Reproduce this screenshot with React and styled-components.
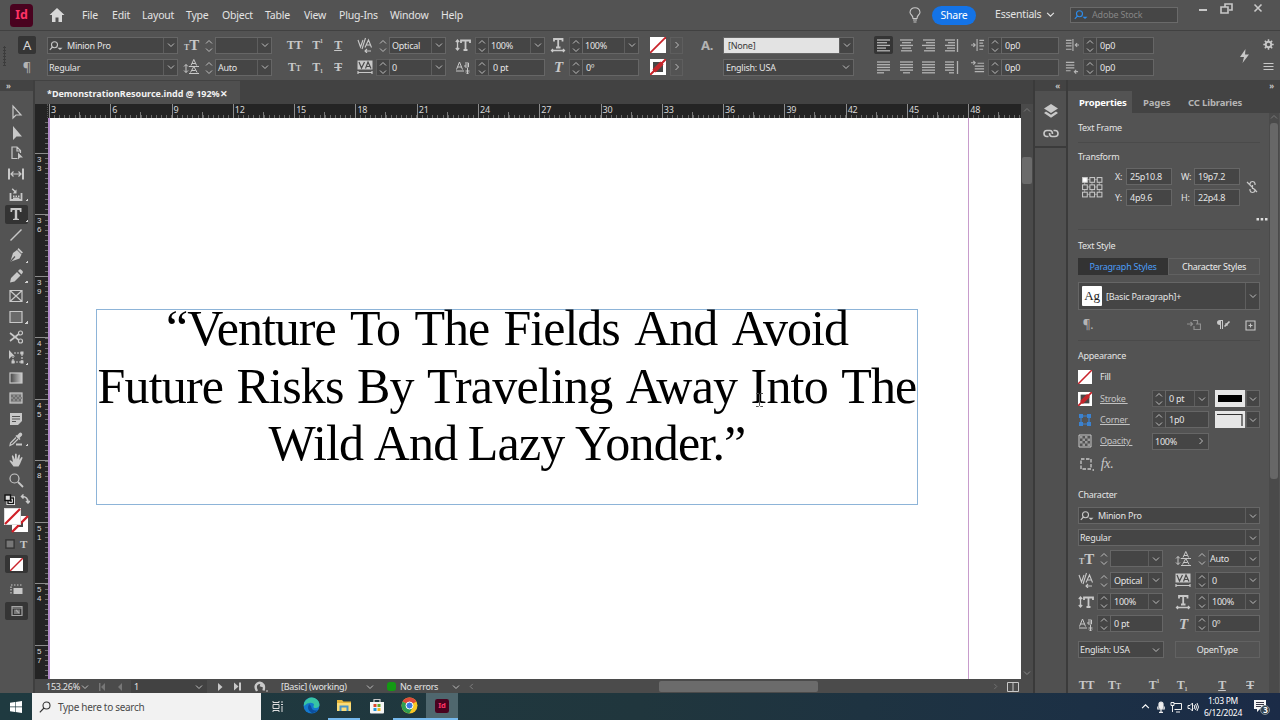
import React from "react";
import styled, { createGlobalStyle } from "styled-components";

const UI_FONT = '"Noto Sans", "Open Sans", sans-serif';

const GlobalStyle = createGlobalStyle`
  * {
    box-sizing: border-box;
  }

  body {
    margin: 0;
    overflow: hidden;
    background: #535353;
  }
`;

/* text shown on the page */
const QUOTE = [
  { width: 682, spacing: -1, words: ["“Venture", "To", "The", "Fields", "And", "Avoid"] },
  { width: 819, spacing: -0.8, words: ["Future", "Risks", "By", "Traveling", "Away", "Into", "The"] },
  { width: 477, spacing: -0.8, words: ["Wild", "And", "Lazy", "Yonder.”"] },
];

const H_MARKS = [3, 6, 9, 12, 15, 18, 21, 24, 27, 30, 33, 36, 39, 42, 45, 48];
const V_MARKS = [33, 36, 39, 42, 45, 48, 51, 54, 57];

/* ---------- icons ---------- */

const Svg = styled.svg`
  display: block;
  flex: none;
  width: ${(p) => p.$w || 16}px;
  height: ${(p) => p.$h || p.$w || 16}px;
  fill: none;
  stroke: ${(p) => p.$color || "#c8c8c8"};
  stroke-width: ${(p) => p.$line || 1.2};
`;

const Chevron = ({ dir = "down", w = 8, color = "#bdbdbd" }) => {
  const paths = {
    down: "M1 2.5 4 5.5 7 2.5",
    up: "M1 5.5 4 2.5 7 5.5",
    right: "M2.5 1 5.5 4 2.5 7",
    left: "M5.5 1 2.5 4 5.5 7",
  };
  return (
    <Svg $w={w} viewBox="0 0 8 8" $color={color} $line={1}>
      <path d={paths[dir]} />
    </Svg>
  );
};

const FILL = { fill: "#c8c8c8", stroke: "none" };

const TOOLS = [
  { id: "select", art: <path d="M5 2v12l3-3h5z" /> },
  { id: "direct", art: <path {...FILL} d="M5 1v14l3.500-3.500H14z" /> },
  { id: "page", art: <><path d="M9.500 13.500H4V2h5l3.500 3.500V8M9 2v4h3.500" /><path {...FILL} d="M10 7.500v7l2-2h3z" /></> },
  { id: "gap", art: <><path strokeWidth="2" d="M1 2.500v11M15 2.500v11" /><path d="M3 8h10M5.500 5.500 3 8l2.500 2.500M10.500 5.500 13 8l-2.500 2.500" /></> },
  { id: "collect", more: true, art: <><path strokeWidth="1.800" d="M2.500 7v7h11V7" /><path {...FILL} d="M5 9.500h1.500V11H5zM7.500 9.500H9V11H7.500zM10 9.500h1.500V11H10zM5 11.500h6.500V13H5zM8.500 7.500V3.500L7.200 4.800 4.700 2.300 3.700 3.300l2.500 2.500L4.900 7.500z" /></> },
  { id: "type", more: true, active: true, art: <path {...FILL} d="M2.500 2h11v4H12l-.5-2H9.200v8.500l1.800.5v1H5v-1l1.800-.5V4H4.500L4 6H2.500z" /> },
  { id: "line", art: <path d="M2.500 13.500l11-11" strokeWidth="1.500" /> },
  { id: "pen", more: true, art: <><path {...FILL} d="M9 3l4.500 4.500-2 4L3 14.500l-.5-.5L5 6z" /><path stroke="#535353" d="M3 14l4-4.500" /><path {...FILL} d="M10.500 1l4.500 4.500-1.500 1L9.500 2.500z" /></> },
  { id: "pencil", more: true, art: <path {...FILL} d="M2 14.500l1-4.500 6-6 3.500 3.500-6 6zM10 3l1.500-1.500q1-.5 2 .5l1 1q.8 1 .2 1.800L13.500 6.500z" /> },
  { id: "frame", more: true, art: <path d="M2 2.500h12v11H2zM2 2.500l12 11M14 2.500l-12 11" /> },
  { id: "rect", more: true, art: <path fill="#6a6a6a" d="M2 2.500h12v11H2z" /> },
  { id: "scissors", art: <><circle cx="12.500" cy="4" r="2" /><circle cx="12.500" cy="12" r="2" /><path strokeWidth="1.600" d="M10.800 11 2 4M10.800 5 2 12" /></> },
  { id: "transform", more: true, art: <><path strokeDasharray="2 1" d="M6 4h8v9H5V8" /><path {...FILL} d="M1 1v9l2.500-2.500H7zM12.500 2.500h3v3h-3zM12.500 11.500h3v3h-3zM3.500 11.500h3v3h-3z" /></> },
  { id: "gradient", art: <rect x="2" y="3" width="12" height="10" fill="url(#toolGradient)" /> },
  { id: "feather", art: <><rect x="2" y="3" width="12" height="10" fill="#8b8b8b" /><path stroke="#555" strokeDasharray="2 2" d="M3 6h10M5 8h9M3 10h10" /></> },
  { id: "note", art: <><path {...FILL} d="M2 2h12v8l-4 4H2z" /><path stroke="#535353" d="M4 5.500h8M4 8h8M4 10.500h4" /></> },
  { id: "eyedropper", more: true, art: <><path d="M8 6.500 2.500 12l-.5 2.500L5 13l5-5" /><path {...FILL} d="M7.500 5l4 4 1-1-1-1 2.500-2.500q.8-1.500-.4-2.500-1.200-1-2.300 0L9 4.500l-.8-.6zM8 12.500h6v2H8z" /></> },
  { id: "hand", art: <path {...FILL} d="M5.500 14.500 1.500 9q0-1 1.300-.6L5 10 3.800 4q.8-1.300 1.600 0L7 7.500V2q.9-1.200 1.700 0l.2 5.500L10.500 3q1-1 1.500.2L11.300 8l2-2.800q1.200-.5 1.200.8L12 12l-1.500 2.500z" /> },
  { id: "zoom", art: <><circle cx="6.500" cy="6.500" r="4.500" /><path strokeWidth="1.800" d="M10 10l5 5" /></> },
];

const SearchIcon = ({ color = "#c8c8c8" }) => (
  <Svg $w={14} $h={10} viewBox="0 0 14 10" $color={color} $line={1.1}>
    <circle cx="5.500" cy="3.800" r="3" />
    <path d="M3.500 6 .8 8.800" />
    <path d="M8.500 6.800h5L11 9z" fill={color} stroke="none" />
  </Svg>
);

const NoneSwatch = ({ w = 16, frame }) => (
  <Svg $w={w} viewBox="0 0 16 16">
    <rect width="16" height="16" fill="#fff" stroke="none" />
    {frame && <rect x="3" y="3" width="10" height="10" fill="#474747" stroke="none" />}
    <path d="M0 16 16 0" stroke="#c9232a" strokeWidth={frame ? 2 : 1.8} />
    {frame && <path d="M4 12 12 4" stroke="#c3262c" strokeWidth="4.500" />}
  </Svg>
);

/* glyph built from serif capitals, as on the character controls */
const Glyph = styled.span`
  display: inline-flex;
  align-items: baseline;
  justify-content: center;
  width: ${(p) => p.$w || 17}px;
  color: #c8c8c8;
  font: ${(p) => (p.$italic ? "italic " : "")}${(p) => (p.$light ? "normal" : "bold")} ${(p) => p.$size || 12}px/14px "Liberation Serif", serif;
  text-decoration: ${(p) => p.$deco || "none"};
  letter-spacing: -0.3px;

  small {
    font-size: 8px;
    line-height: 8px;
  }

  sup {
    font-size: 6px;
    line-height: 6px;
    align-self: flex-start;
  }

  sub {
    font-size: 6px;
    line-height: 6px;
    align-self: flex-end;
  }
`;

const SizeIcon = () => <Glyph $size={15}><small>T</small>T</Glyph>;

const LeadingIcon = () => (
  <Svg $w={16} viewBox="0 0 16 16" $line={1}>
    <path d="M3 5.500v8M1 7.500l2-2 2 2M1 11.500l2 2 2-2M6 7.500h10M6 14.500h10M8 6.500l2.800-6 2.800 6M9 4.500h3.600M7.500 13.500l3.300-6 3.300 6M9 11.500h3.600" />
  </Svg>
);

const KerningIcon = () => (
  <Svg $w={16} viewBox="0 0 16 16" $line={1.1}>
    <path d="M1 3l2.500 7L6 3M8.500 1 5 12M8 10.500 11.500 3l3 7.500M9 8h5M8 14h6M10 12l-2 2 2 2" />
  </Svg>
);

const TrackingIcon = () => (
  <Svg $w={16} viewBox="0 0 16 16" $line={1.2}>
    <rect x=".5" y="1.500" width="15" height="9" fill="#c8c8c8" stroke="none" />
    <path stroke="#4a4a4a" d="M2 3l2.500 6L7.500 3M8.500 9.500 11 3l3 6.500M9.500 7.500h4" />
    <path d="M1 13.500h14M1 12v3M15 12v3" />
  </Svg>
);

const VScaleIcon = () => (
  <Svg $w={16} viewBox="0 0 16 16" $line={1.3}>
    <path d="M2.500 3v10M.8 5l1.700-2 1.700 2M.8 11l1.700 2 1.700-2" />
    <path strokeWidth="1.800" d="M6 6V3.500h9V6M10.500 3.500V13M8.500 13h4" />
  </Svg>
);

const HScaleIcon = () => (
  <Svg $w={16} viewBox="0 0 16 16" $line={1.3}>
    <path strokeWidth="1.800" d="M4 4.500V2h8.500v2.500M8.200 2v8.500M6 10.500h4.500" />
    <path d="M1.500 13.500h13M3 12l-1.500 1.500L3 15M13 12l1.500 1.500L13 15" />
  </Svg>
);

const BaselineIcon = () => (
  <Svg $w={16} viewBox="0 0 16 16" $line={1}>
    <path d="M1 12h8M1.500 10.500 4.500 3l3 7.500M2.500 8h4M10 4h3.500v4H10V6h3.500M12.500 9v6M10.500 12h4M11 13.500l1.500 1.500 1.500-1.500" />
  </Svg>
);

const ALIGN_LINES = {
  left: [[1, 14], [1, 11], [1, 14], [1, 10], [1, 14]],
  center: [[1, 14], [3, 12], [1, 14], [3, 12], [2, 13]],
  right: [[2, 14], [5, 14], [1, 14], [5, 14], [3, 14]],
  spine: [[1, 11], [4, 11], [1, 11], [3, 11], [1, 11]],
  jleft: [[1, 14], [1, 14], [1, 14], [1, 14], [1, 8]],
  jcenter: [[1, 14], [1, 14], [1, 14], [1, 14], [4, 11]],
  jfull: [[1, 14], [1, 14], [1, 14], [1, 14], [1, 14]],
  jspine: [[1, 10], [1, 10], [1, 10], [1, 10], [5, 10]],
};

const AlignIcon = ({ kind }) => (
  <Svg $w={15} viewBox="0 0 15 15" $line={1.3} $color="#b4b4b4">
    {ALIGN_LINES[kind].map(([a, b], i) => (
      <path key={i} d={`M${a} ${2 + i * 2.7}H${b}`} />
    ))}
    {kind.endsWith("spine") && <path d="M13.500 1v13" />}
  </Svg>
);

const IndentIcon = ({ kind }) => {
  const art = {
    left: "M0 7.500h4M2.500 5.500l2 2-2 2M6.500 1v13M9 2.500h5M9 5.500h4M9 8.500h5M9 12h4",
    right: "M15 7.500h-3M13 5.500l-2 2 2 2M8.500 1v13M1 2.500h6M1 5.500h6M1 8.500h6M1 12h6",
    first: "M0 3h4M2.500 1l2 2-2 2M7 3.500h7M4 6.500h10M4 9.500h10M4 12.500h10",
    last: "M1 2.500h9M1 5.500h9M1 8.500h9M1 11.500h5M14 12.500h-4M12 10.500l-2 2 2 2",
  };
  return (
    <Svg $w={14} viewBox="0 0 15 15" $line={1.2} $color="#b4b4b4">
      <path d={art[kind]} />
    </Svg>
  );
};

/* ---------- shared controls ---------- */

const Shell = styled.div`
  display: flex;
  flex-direction: column;
  width: 1280px;
  height: 720px;
  overflow: hidden;
  background: #535353;
  color: #e4e4e4;
  font: 9px/12px ${UI_FONT};
  letter-spacing: -0.25px;
  white-space: nowrap;
`;

const Box = styled.div`
  display: flex;
  width: ${(p) => p.$w}px;
  height: ${(p) => p.$h || 17}px;
  background: #454545;
  border: 1px solid #666;
`;

const Value = styled.span`
  display: flex;
  align-items: center;
  flex: 1;
  gap: 4px;
  min-width: 0;
  padding-top: 1px;
  padding-left: ${(p) => p.$pad ?? 3}px;
  background: ${(p) => (p.$light ? "#e3e3e3" : "transparent")};
  color: ${(p) => (p.$light ? "#3a3a3a" : "#e4e4e4")};
`;

const Arrow = styled.span`
  display: flex;
  align-items: center;
  justify-content: center;
  width: 14px;
  border-left: ${(p) => (p.$plain ? "none" : "1px solid #5e5e5e")};
`;

const SpinBox = styled.span`
  display: flex;
  flex-direction: column;
  align-items: center;
  justify-content: space-between;
  width: 13px;
  height: 17px;
  padding: 0 1px 0 0;
  background: ${(p) => (p.$off ? "transparent" : "#454545")};
  border: 1px solid ${(p) => (p.$off ? "transparent" : "#5e5e5e")};
  border-right: none;
`;

const Line = styled.div`
  display: flex;
`;

const Spin = ({ off }) => (
  <SpinBox $off={off}>
    <Chevron dir="up" w={8} />
    <Chevron dir="down" w={8} />
  </SpinBox>
);

const Select = ({ w, h, children, pad, light, plain }) => (
  <Box $w={w} $h={h}>
    <Value $pad={pad} $light={light}>{children}</Value>
    <Arrow $plain={plain}><Chevron /></Arrow>
  </Box>
);

const Combo = ({ w, value, arrow, off, pad }) => (
  <Line>
    <Spin off={off} />
    <Box $w={w - 13}>
      <Value $pad={pad}>{value}</Value>
      {arrow && <Arrow><Chevron dir={arrow} /></Arrow>}
    </Box>
  </Line>
);

/* ---------- menu bar ---------- */

const MenuBar = styled.header`
  display: flex;
  align-items: center;
  flex: none;
  height: 31px;
  padding-left: 10px;
  border-bottom: 1px solid #414141;
  font-size: 10.5px;
  letter-spacing: -0.2px;
`;

const Logo = styled.div`
  display: flex;
  align-items: center;
  justify-content: center;
  width: ${(p) => p.$size}px;
  height: ${(p) => p.$size}px;
  border-radius: ${(p) => p.$size / 6}px;
  background: #49021f;
  color: #ff3366;
  font: bold ${(p) => p.$size * 0.54}px/1 ${UI_FONT};
  letter-spacing: -0.2px;
`;

const HomeSlot = styled.div`
  margin: 0 0 0 16px;
  width: 33px;
`;

const MenuItem = styled.span`
  width: ${(p) => p.$w}px;
`;

const MenuRight = styled.div`
  display: flex;
  align-items: center;
  height: 100%;
  margin-left: auto;
`;

const Share = styled.div`
  width: 44px;
  height: 19px;
  margin: 0 19px 0 11px;
  border-radius: 10px;
  background: #1473e6;
  color: #fff;
  text-align: center;
  line-height: 19px;
`;

const StockSearch = styled.div`
  display: flex;
  align-items: center;
  gap: 4px;
  width: 108px;
  height: 16px;
  margin: 0 20px 0 17px;
  padding-left: 3px;
  border: 1px solid #6a6a6a;
  background: #464646;
  color: #858585;
  font-size: 9px;
`;

const WindowButtons = styled.div`
  display: flex;
  align-self: flex-start;
  align-items: center;
  height: 16px;
  width: 82px;
  gap: 12px;
`;

const CloseSlot = styled.span`
  margin-left: 8px;
`;

const Workspace = styled.span`
  display: flex;
  align-items: center;
  gap: 5px;
  width: 58px;
  margin-top: -2px;
`;

const MENUS = [
  ["File", 30], ["Edit", 30], ["Layout", 44], ["Type", 36], ["Object", 43],
  ["Table", 39], ["View", 35], ["Plug-Ins", 51], ["Window", 51], ["Help", 24],
];

const Menu = () => (
  <MenuBar>
    <Logo $size={23}>Id</Logo>
    <HomeSlot>
      <Svg $w={16} viewBox="0 0 16 16">
        <path d="M8 1 .5 8H3v7h3.500v-4.500h3V15H13V8h2.500z" fill="#d8d8d8" stroke="none" />
      </Svg>
    </HomeSlot>
    {MENUS.map(([name, w]) => (
      <MenuItem key={name} $w={w}>{name}</MenuItem>
    ))}
    <MenuRight>
      <Svg $w={12} $h={16} viewBox="0 0 12 16" $line={1.1}>
        <path d="M4 11.500Q4 9.500 2.500 8 1 6.500 1 5.200q.5-4.400 5-4.400t5 4.400Q11 6.500 9.500 8 8 9.500 8 11.500zM4 13h4M4.500 15h3" />
      </Svg>
      <Share>Share</Share>
      <Workspace>Essentials <Chevron w={9} color="#e4e4e4" /></Workspace>
      <StockSearch><SearchIcon color="#2d8ceb" />Adobe Stock</StockSearch>
      <WindowButtons>
        <Svg $w={10} viewBox="0 0 10 10" $line={2}><path d="M1 7h8" /></Svg>
        <Svg $w={13} viewBox="0 0 13 13" $line={1.6}><path d="M1 5h7v6H1zM5 4.500V2h7v6H9" /></Svg>
        <CloseSlot>
          <Svg $w={10} viewBox="0 0 10 10" $line={1.6}><path d="M1.500 1.500l7 7M8.500 1.500l-7 7" /></Svg>
        </CloseSlot>
      </WindowButtons>
    </MenuRight>
  </MenuBar>
);

/* ---------- control bar ---------- */

const ControlBar = styled.section`
  display: flex;
  flex: none;
  height: 49px;
  padding-left: 3px;
`;

const Grip = styled.i`
  width: 15px;
  height: 20px;
  margin-top: 15px;
  background: radial-gradient(circle, #3c3c3c 1px, transparent 1.2px) 0 0 / 3px 3px;
  background-clip: content-box;
  padding-right: 12px;
`;

const ControlGrid = styled.div`
  display: grid;
  grid-template-columns:
    29px 136px 19px 84px 23px 24px 24px 19px 79px 20px 75px 19px 81px 20px 28px
    25px 151px 23px 22px 23px 29px 17px 77px 18px 71px;
  grid-template-rows: 22px 22px;
  align-items: center;
  padding-top: 3px;
`;

const ModeButton = styled.span`
  width: 18px;
  height: 18px;
  border-radius: 2px;
  background: ${(p) => (p.$on ? "#353535" : "transparent")};
  color: ${(p) => (p.$dim ? "#b4b4b4" : "#d8d8d8")};
  font: ${(p) => (p.$bold ? "bold " : "")}${(p) => p.$size || 13}px/18px ${UI_FONT};
  text-align: center;
`;

const AlignButton = styled.span`
  display: flex;
  align-items: center;
  justify-content: center;
  width: 19px;
  height: 18px;
  border-radius: 2px;
  background: ${(p) => (p.$on ? "#353535" : "transparent")};
`;

const BarEnd = styled.div`
  display: flex;
  align-items: center;
  gap: 13px;
  margin-left: auto;
  padding-right: 6px;
`;

const BarEndStack = styled.div`
  display: flex;
  flex-direction: column;
  gap: 11px;
`;

const More = styled.span`
  display: flex;
  align-items: center;
  justify-content: center;
  width: 13px;
  height: 17px;
  border: 1px solid #5e5e5e;
`;

const Controls = () => (
  <ControlBar>
    <Grip />
    <ControlGrid>
      <ModeButton $on>A</ModeButton>
      <Select w={131} pad={1}><SearchIcon />Minion Pro</Select>
      <SizeIcon />
      <Combo w={70} off arrow="down" />
      <Glyph>TT</Glyph>
      <Glyph>T<sup>1</sup></Glyph>
      <Glyph $deco="underline" $w={10}>T</Glyph>
      <KerningIcon />
      <Combo w={70} off arrow="down" value="Optical" pad={2} />
      <VScaleIcon />
      <Combo w={70} arrow="down" value="100%" pad={2} />
      <HScaleIcon />
      <Combo w={70} arrow="down" value="100%" pad={2} />
      <NoneSwatch />
      <More><Chevron dir="right" /></More>
      <ModeButton $size={13} $bold $dim>A.</ModeButton>
      <Select w={131} light pad={4}>[None]</Select>
      <AlignButton $on><AlignIcon kind="left" /></AlignButton>
      <AlignButton><AlignIcon kind="center" /></AlignButton>
      <AlignButton><AlignIcon kind="right" /></AlignButton>
      <AlignButton><AlignIcon kind="spine" /></AlignButton>
      <IndentIcon kind="left" />
      <Combo w={71} value="0p0" />
      <IndentIcon kind="right" />
      <Combo w={71} value="0p0" />

      <ModeButton $dim>¶</ModeButton>
      <Select w={131} pad={1}>Regular</Select>
      <LeadingIcon />
      <Combo w={70} off arrow="down" value="Auto" pad={2} />
      <Glyph>T<small>T</small></Glyph>
      <Glyph>T<sub>1</sub></Glyph>
      <Glyph $deco="line-through" $w={10}>T</Glyph>
      <TrackingIcon />
      <Combo w={70} arrow="down" value="0" pad={2} />
      <BaselineIcon />
      <Combo w={70} value="0 pt" pad={4} />
      <Glyph $size={15} $italic>T</Glyph>
      <Combo w={70} value="0º" />
      <NoneSwatch frame />
      <More><Chevron dir="right" /></More>
      <span />
      <Select w={131} plain pad={2}>English: USA</Select>
      <AlignButton><AlignIcon kind="jleft" /></AlignButton>
      <AlignButton><AlignIcon kind="jcenter" /></AlignButton>
      <AlignButton><AlignIcon kind="jfull" /></AlignButton>
      <AlignButton><AlignIcon kind="jspine" /></AlignButton>
      <IndentIcon kind="first" />
      <Combo w={71} value="0p0" />
      <IndentIcon kind="last" />
      <Combo w={71} value="0p0" />
    </ControlGrid>
    <BarEnd>
      <Svg $w={11} $h={14} viewBox="0 0 11 14"><path {...FILL} d="M6.500 0 1 8h4l-1.500 6L10 5.500H6z" /></Svg>
      <BarEndStack>
        <Svg $w={11} viewBox="0 0 11 11" $line={2}>
          <circle cx="5.500" cy="5.500" r="2.800" />
          <path d="M5.500.3v2M5.500 8.700v2M.3 5.500h2M8.700 5.500h2M1.800 1.800 3 3M8 8l1.200 1.200M9.200 1.800 8 3M3 8 1.800 9.200" strokeWidth="1.500" />
        </Svg>
        <Svg $w={11} viewBox="0 0 11 11" $line={1}><path d="M.5 2.500h10M.5 5.500h10M.5 8.500h10" /></Svg>
      </BarEndStack>
    </BarEnd>
  </ControlBar>
);

/* ---------- workspace ---------- */

const Main = styled.main`
  display: flex;
  flex: 1;
  min-height: 0;
  background: #424242;
`;

const PanelHead = styled.div`
  display: flex;
  flex: none;
  align-items: center;
  justify-content: ${(p) => p.$align || "flex-start"};
  height: 11px;
  padding: 0 6px;
  background: #434343;
  color: #c4c4c4;
  font: bold 8px/9px ${UI_FONT};
`;

const ToolColumn = styled.aside`
  display: flex;
  flex-direction: column;
  flex: none;
  width: 35px;
  border-right: 2px solid #3f3f3f;
`;

const Tools = styled.div`
  display: flex;
  flex-direction: column;
  align-items: center;
  flex: 1;
  padding-top: 11px;
  background: #535353;
`;

const Tool = styled.div`
  display: grid;
  grid-template-columns: 17px 3px;
  justify-content: end;
  align-items: center;
  width: 23px;
  height: 18.440px;
  margin: 1px 0;
  border-radius: 2px;
  background: ${(p) => (p.$on ? "#333" : "transparent")};
`;

const Corner = styled.i`
  align-self: end;
  width: 3px;
  height: 3px;
  margin-bottom: 2px;
  background: linear-gradient(135deg, transparent 50%, #d0d0d0 50%);
`;

const ToolPair = styled.div`
  display: flex;
  align-items: center;
  justify-content: space-between;
  width: ${(p) => p.$w}px;
  height: ${(p) => p.$h}px;
`;

const ModeCell = styled.div`
  display: flex;
  align-items: center;
  justify-content: center;
  width: 23px;
  height: 18px;
  margin-bottom: ${(p) => p.$gap || 0}px;
  border-radius: 2px;
  background: ${(p) => (p.$on ? "#353535" : "transparent")};
`;

const Toolbox = () => (
  <ToolColumn>
    <PanelHead>»</PanelHead>
    <Tools>
      {TOOLS.map((tool) => (
        <Tool key={tool.id} $on={tool.active}>
          <Svg $w={16} viewBox="0 0 16 16">
            {tool.id === "gradient" && (
              <linearGradient id="toolGradient">
                <stop offset="0" stopColor="#444" />
                <stop offset="1" stopColor="#ccc" />
              </linearGradient>
            )}
            {tool.art}
          </Svg>
          {tool.more && <Corner />}
        </Tool>
      ))}
      <ToolPair $w={26} $h={18}>
        <Svg $w={11} viewBox="0 0 11 11" $line={1.4} $color="#111">
          <rect x="4" y="4" width="5.500" height="5.500" stroke="#fff" strokeWidth="3" />
          <rect x="4" y="4" width="5.500" height="5.500" />
          <rect x="1" y="1" width="5.500" height="5.500" fill="#ddd" />
        </Svg>
        <Svg $w={10} viewBox="0 0 10 10" $line={1.5}><path d="M2 2.500q6 0 6 6M3.500.5 1.500 2.500l2 2M6 7l2 2 2-2" /></Svg>
      </ToolPair>
      <Svg $w={25} viewBox="0 0 25 25">
        <rect x="8" y="8" width="16" height="16" fill="#fff" stroke="none" />
        <rect x="13" y="13" width="6" height="6" fill="#474747" stroke="none" />
        <path d="M8 24 24 8" stroke="#d01f27" strokeWidth="2.400" />
        <rect x=".5" y=".5" width="16" height="16" fill="#fff" stroke="#ddd" strokeWidth="1" />
        <path d="M1 16 16 1" stroke="#d01f27" strokeWidth="2.200" />
      </Svg>
      <ToolPair $w={23} $h={22}>
        <Svg $w={10} viewBox="0 0 11 11" $line={1.5} $color="#333"><rect x="1" y="1" width="9" height="9" fill="#777" /></Svg>
        <Glyph $w={9} $size={11}>T</Glyph>
      </ToolPair>
      <ModeCell $on $gap={7}><NoneSwatch w={13} /></ModeCell>
      <ModeCell $gap={4}>
        <Svg $w={13} viewBox="0 0 13 13"><path d="M1 5V2h11" strokeDasharray="1.500 1.500" /><rect x="3.500" y="5" width="9" height="6" {...FILL} /><path d="M1 6v5" strokeDasharray="1.500 1.500" /></Svg>
      </ModeCell>
      <ModeCell $on>
        <Svg $w={12} viewBox="0 0 12 12" $color="#a5a5a5"><path d="M1 1.500h10v9H1zM1 3h10" /><rect x="3" y="4.500" width="6" height="4.500" fill="#777" stroke="none" /><path d="M5 5l3 3" /></Svg>
      </ModeCell>
    </Tools>
  </ToolColumn>
);

const DocColumn = styled.section`
  display: flex;
  flex-direction: column;
  flex: none;
  width: 1000px;
  border-right: 2px solid #3a3a3a;
`;

const TabRow = styled.div`
  flex: none;
  height: 24px;
  padding-top: 1px;
  background: #424242;
`;

const DocTab = styled.div`
  width: 205px;
  height: 23px;
  padding-left: 12px;
  background: #4f4f4f;
  color: #f2f2f2;
  font-weight: bold;
  line-height: 25px;
  letter-spacing: 0;
`;

const DocBody = styled.div`
  display: flex;
  flex: 1;
  min-height: 0;
`;

const DocGrid = styled.div`
  display: grid;
  grid-template: 14px 1fr / 13px 1fr;
  width: 986px;
  overflow: hidden;
`;

const RulerCorner = styled.div`
  background: #242424;
  border-right: 1px dotted #555;
`;

const HRuler = styled.div`
  display: flex;
  overflow: hidden;
  padding-left: 1px;
  background: #242424;
`;

const HUnit = styled.div`
  flex: none;
  width: 61.290px;
  padding-left: 1px;
  border-left: 1px solid #8c8c8c;
  background:
    repeating-linear-gradient(90deg, transparent 0 4.110px, #6a6a6a 4.110px 5.110px) 0 100% / 100% 3px no-repeat,
    linear-gradient(90deg, transparent 29px, #777 29px 30px, transparent 30px) 0 100% / 100% 6px no-repeat;
  color: #d8d8d8;
  font-size: 9px;
  line-height: 11px;
  letter-spacing: -0.2px;
`;

const VRuler = styled.div`
  display: flex;
  flex-direction: column;
  overflow: hidden;
  background: #242424;
`;

const VUnit = styled.div`
  flex: none;
  height: ${(p) => p.$h || 61.44}px;
  padding: 1px 0 0 2px;
  border-top: ${(p) => (p.$h ? "none" : "1px solid #8c8c8c")};
  background: repeating-linear-gradient(0deg, transparent 0 4.120px, #6a6a6a 4.120px 5.120px) 100% 0 / 3px 100% no-repeat;
  color: #d8d8d8;
  font: 8px/9px "Liberation Sans", sans-serif;

  span {
    display: block;
  }
`;

const Pasteboard = styled.div`
  display: flex;
  background: #fff;
  border-left: 2px solid #b58ccc;
`;

const Page = styled.div`
  width: 919px;
  padding: 191px 0 0 46px;
  border-right: 1px solid #c89ccc;
`;

const TextFrame = styled.div`
  position: relative;
  display: flex;
  flex-direction: column;
  align-items: center;
  width: 822px;
  height: 196px;
  border: 1px solid #8db4d8;
`;

const QuoteLine = styled.div`
  display: flex;
  justify-content: space-between;
  width: ${(p) => p.$w}px;
  height: 57.500px;
  color: #000;
  font: 50px/36px "Liberation Serif", serif;
  letter-spacing: ${(p) => p.$spacing}px;
`;

/* text cursor floating over the frame */
const Cursor = styled.div`
  position: absolute;
  left: 658px;
  top: 83px;
`;

const VScroll = styled.div`
  display: flex;
  flex-direction: column;
  align-items: center;
  justify-content: space-between;
  width: 12px;
  padding: 2px 0;
  background: #4a4a4a;
`;

const VThumb = styled.div`
  width: 10px;
  height: 27px;
  margin-top: 43px;
  margin-bottom: auto;
  border-radius: 2px;
  background: #6b6b6b;
`;

const StatusBar = styled.div`
  display: flex;
  align-items: center;
  flex: none;
  height: 14px;
  padding: 1px 0 0 11px;
  background: #4b4b4b;
`;

const StatusItem = styled.span`
  display: flex;
  align-items: center;
  flex: none;
  width: ${(p) => p.$w}px;
  height: 13px;
  padding-left: ${(p) => p.$pad || 0}px;
  background: ${(p) => (p.$dark ? "#424242" : "transparent")};
`;

const Dot = styled.i`
  width: 9px;
  height: 9px;
  border-radius: 3px;
  background: #139a13;
`;

const HThumb = styled.div`
  flex: none;
  width: 159px;
  height: 11px;
  margin-left: 183px;
  border-radius: 2px;
  background: #6b6b6b;
`;

const Document = () => (
  <DocColumn>
    <TabRow>
      <DocTab>*DemonstrationResource.indd @ 192%✕</DocTab>
    </TabRow>
    <DocBody>
      <DocGrid>
        <RulerCorner />
        <HRuler>
          {H_MARKS.map((n) => <HUnit key={n}>{n}</HUnit>)}
        </HRuler>
        <VRuler>
          <VUnit $h={35} />
          {V_MARKS.map((n) => (
            <VUnit key={n}>
              {String(n).split("").map((d, i) => <span key={i}>{d}</span>)}
            </VUnit>
          ))}
        </VRuler>
        <Pasteboard>
          <Page>
            <TextFrame>
              {QUOTE.map((line, i) => (
                <QuoteLine key={i} $w={line.width} $spacing={line.spacing}>
                  {line.words.map((word) => <span key={word}>{word}</span>)}
                </QuoteLine>
              ))}
              <Cursor>
                <Svg $w={9} $h={14} viewBox="0 0 9 14" $color="#555" $line={1}>
                  <path d="M1 .5h2.500l1 1 1-1H8M4.500 1.500v11M1 13.500h2.500l1-1 1 1H8M3 9.500h3" />
                </Svg>
              </Cursor>
            </TextFrame>
          </Page>
        </Pasteboard>
      </DocGrid>
      <VScroll>
        <Chevron dir="up" color="#777" />
        <VThumb />
        <Chevron color="#888" />
      </VScroll>
    </DocBody>
    <StatusBar>
      <StatusItem $w={35}>153.26%</StatusItem>
      <StatusItem $w={17}><Chevron /></StatusItem>
      <StatusItem $w={18}><Svg $w={8} viewBox="0 0 8 8"><path {...FILL} fill="#777" d="M1 0h1.500v8H1zM7 0v8L3 4z" /></Svg></StatusItem>
      <StatusItem $w={15}><Svg $w={8} viewBox="0 0 8 8"><path fill="#777" stroke="none" d="M6 0v8L2 4z" /></Svg></StatusItem>
      <StatusItem $w={64} $dark $pad={3}>1</StatusItem>
      <StatusItem $w={12} $dark><Chevron /></StatusItem>
      <StatusItem $w={26} $pad={9}><Svg $w={8} viewBox="0 0 8 8"><path {...FILL} d="M2 0v8l4.500-4z" /></Svg></StatusItem>
      <StatusItem $w={21}><Svg $w={9} viewBox="0 0 9 8"><path {...FILL} d="M1 0v8l4.500-4zM6 0h2v8H6z" /></Svg></StatusItem>
      <StatusItem $w={23}>
        <Svg $w={14} $h={12} viewBox="0 0 14 12" $line={2.4}><path d="M3 10Q0 5 3.500 2.500 7 .5 9.500 4q1 2 0 5.500M9 5l-3-1" /><path strokeWidth="1" d="M12 10h2" /></Svg>
      </StatusItem>
      <StatusItem $w={89} $pad={4}>[Basic] (working)</StatusItem>
      <StatusItem $w={21}><Chevron /></StatusItem>
      <StatusItem $w={13}><Dot /></StatusItem>
      <StatusItem $w={51}>No errors</StatusItem>
      <StatusItem $w={17} $pad={1}><Chevron /></StatusItem>
      <StatusItem $w={8}><Chevron dir="left" w={7} color="#888" /></StatusItem>
      <HThumb />
      <StatusItem $w={189} $pad={174}><Chevron dir="right" w={7} color="#777" /></StatusItem>
      <Svg $w={12} $h={10} viewBox="0 0 12 10" $line={1}><path d="M.5.5h11v9H.5zM6 0v10" /></Svg>
    </StatusBar>
  </DocColumn>
);

const DockColumn = styled.aside`
  display: flex;
  flex-direction: column;
  flex: none;
  width: 33px;
  background: #505050;
  border-right: 2px solid #3b3b3b;
`;

const DockGroup = styled.div`
  display: flex;
  flex-direction: column;
  align-items: center;
  gap: 9px;
  height: 57px;
  padding: 12px 0 0 1px;
  border-bottom: 2px solid #3b3b3b;
`;

const Dock = () => (
  <DockColumn>
    <PanelHead $align="flex-end">«</PanelHead>
    <DockGroup>
      <Svg $w={16} viewBox="0 0 16 16">
        <path {...FILL} d="M8 1 15 5.500 8 10 1 5.500zM3 8.500 8 11.700 13 8.500 15 10 8 14.800 1 10z" />
      </Svg>
      <Svg $w={16} $h={12} viewBox="0 0 16 12" $line={1.6}>
        <path d="M9.500 6Q9.500 2.500 7 2.500H4Q1 2.500 1 5.500t3 3h1.500M6.500 5Q6.500 8.500 9 8.500h3q3 0 3-3t-3-3h-1.500" />
      </Svg>
    </DockGroup>
  </DockColumn>
);

/* ---------- properties panel ---------- */

const PropsColumn = styled.aside`
  display: flex;
  flex-direction: column;
  flex: 1;
  min-width: 0;
`;

const PropsTabs = styled.div`
  display: flex;
  flex: none;
  height: 22px;
  background: #434343;
  font-weight: bold;
  font-size: 9.500px;
  line-height: 23px;
  letter-spacing: -0.15px;
`;

const PropsTab = styled.span`
  width: ${(p) => p.$w}px;
  padding-left: 11px;
  background: ${(p) => (p.$on ? "#535353" : "transparent")};
  color: ${(p) => (p.$on ? "#fff" : "#b5b5b5")};
`;

const PropsBody = styled.div`
  display: flex;
  flex: 1;
  min-height: 0;
  background: #535353;
`;

const PropsContent = styled.div`
  width: 201px;
  height: 580px;
  padding: 0 9px 0 10px;
  overflow: hidden;
`;

const PropsScroll = styled.div`
  display: flex;
  flex-direction: column;
  align-items: center;
  width: 10px;
  background: #4a4a4a;
`;

const PropsThumb = styled.div`
  width: 8px;
  height: 356px;
  margin: 2px 0 auto;
  border-radius: 3px;
  background: #676767;
`;

const Row = styled.div`
  display: flex;
  align-items: center;
  height: ${(p) => p.$h}px;
  padding-top: ${(p) => p.$top || 0}px;
  margin-top: ${(p) => p.$gap || 0}px;
  border-bottom: ${(p) => (p.$rule ? "1px solid #4a4a4a" : "none")};
`;

const TransformGrid = styled.div`
  display: grid;
  grid-template-columns: 37px 11px 55px 13px 52px 14px;
  grid-template-rows: 21px 21px;
  align-items: center;
  margin: -1px 0 1px;
`;

const Spanned = styled.span`
  grid-row: span 2;
  padding-left: ${(p) => p.$pad || 0}px;
`;

const StyleTab = styled.span`
  width: ${(p) => p.$w}px;
  height: 17px;
  border: 1px solid ${(p) => (p.$on ? "#333" : "#616161")};
  background: ${(p) => (p.$on ? "#333" : "transparent")};
  color: ${(p) => (p.$on ? "#4b9cf5" : "#ececec")};
  line-height: 16px;
  text-align: center;
`;

const Sample = styled.span`
  width: 20px;
  height: 20px;
  margin: -1px 0 0 1px;
  border-radius: 1px;
  background: #fff;
  color: #222;
  font: 13px/20px "Liberation Serif", serif;
  text-align: center;
`;

const IconSlot = styled.span`
  display: flex;
  align-items: center;
  flex: none;
  width: ${(p) => p.$w}px;
  padding-left: ${(p) => p.$pad || 0}px;
`;

const LinkLabel = styled.span`
  width: 52px;
  color: ${(p) => (p.$plain ? "#e4e4e4" : "#c2c2c2")};
  text-decoration: ${(p) => (p.$plain ? "none" : "underline")};
  text-underline-offset: 1px;
  white-space: pre;
`;

const Preview = styled.span`
  display: flex;
  align-items: center;
  justify-content: center;
  width: 30px;
  height: 17px;
  margin-left: 6px;
  background: #e6e6e6;
`;

const CharGrid = styled.div`
  display: grid;
  grid-template-columns: 19px 78px 20px 65px;
  grid-auto-rows: 21.600px;
  align-items: center;
  margin-top: 2px;
`;

const OpenType = styled.span`
  width: 86px;
  height: 17px;
  margin-left: 11px;
  border: 1px solid #626262;
  line-height: 16px;
  text-align: center;
`;

const REF_POINTS = [1, 8, 15];

const Properties = () => (
  <PropsColumn>
    <PanelHead $align="flex-end">»</PanelHead>
    <PropsTabs>
      <PropsTab $on $w={64}>Properties</PropsTab>
      <PropsTab $w={45}>Pages</PropsTab>
      <PropsTab $w={80}>CC Libraries</PropsTab>
    </PropsTabs>
    <PropsBody>
      <PropsContent>
        <Row $h={30} $top={1} $rule>Text Frame</Row>
        <Row $h={24} $top={3}>Transform</Row>
        <TransformGrid>
          <Spanned $pad={3}>
            <Svg $w={23} viewBox="0 0 22 22" $line={1}>
              <path d="M3.500 3.500h14v14h-14zM10.500 3.500v14M3.500 10.500h14" strokeWidth=".6" />
              {REF_POINTS.map((y) =>
                REF_POINTS.map((x) => (
                  <rect key={`${x}-${y}`} x={x + 0.5} y={y + 0.5} width="4.500" height="4.500" fill={x + y === 2 ? "#fff" : "#535353"} />
                ))
              )}
            </Svg>
          </Spanned>
          <span>X:</span>
          <Box $w={46}><Value>25p10.8</Value></Box>
          <span>W:</span>
          <Box $w={46}><Value>19p7.2</Value></Box>
          <Spanned>
            <Svg $w={12} $h={14} viewBox="0 0 12 14">
              <path d="M4 5V3.500Q4.500 1.500 6.500 1.500T9 3.500V5M4 9v1.500q.5 2 2.500 2t2.500-2V9M6.500 5v4M1 2l10 10" />
            </Svg>
          </Spanned>
          <span>Y:</span>
          <Box $w={46}><Value>4p9.6</Value></Box>
          <span>H:</span>
          <Box $w={46}><Value>22p4.8</Value></Box>
        </TransformGrid>
        <Row $h={21} $rule>
          <IconSlot $w={190} $pad={178}>
            <Svg $w={12} $h={4} viewBox="0 0 12 4"><path d="M.5 1h2.500v2.500H.5zM4.700 1h2.500v2.500H4.700zM9 1h2.500v2.500H9z" fill="#ddd" stroke="none" /></Svg>
          </IconSlot>
        </Row>
        <Row $h={28} $top={3}>Text Style</Row>
        <Row $h={17}>
          <StyleTab $on $w={90}>Paragraph Styles</StyleTab>
          <StyleTab $w={92}>Character Styles</StyleTab>
        </Row>
        <Row $h={28} $gap={7}>
          <Select w={182} h={28} pad={2}><Sample>Ag</Sample>[Basic Paragraph]+</Select>
        </Row>
        <Row $h={31} $rule>
          <IconSlot $w={107} $pad={1}><ModeButton $size={12} $dim>¶.</ModeButton></IconSlot>
          <IconSlot $w={30} $pad={2}>
            <Svg $w={14} viewBox="0 0 14 14" $color="#8f8f8f"><path d="M0 6h5M3.500 4l2 2-2 2M6 2.500h4.500V6M7 8v3.500h6.500V6H9" /></Svg>
          </IconSlot>
          <IconSlot $w={30}>
            <Svg $w={16} viewBox="0 0 16 16">
              <path {...FILL} d="M6 3h2v9H7V4H6v8H5V8Q2 8 2 5.500T5 3z" />
              <path d="M9.500 9.500 11 8M10.500 6.500l2 2M12 7l2.500-2.500" strokeWidth="1.600" />
            </Svg>
          </IconSlot>
          <Svg $w={11} viewBox="0 0 11 11" $line={1.1}><path d="M1 1h9v9H1zM5.500 3.500v4M3.500 5.500h4" /></Svg>
        </Row>
        <Row $h={25} $top={5}>Appearance</Row>
        <Row $h={22}>
          <IconSlot $w={22}><NoneSwatch w={14} /></IconSlot>
          <LinkLabel $plain>Fill</LinkLabel>
        </Row>
        <Row $h={21}>
          <IconSlot $w={22}><NoneSwatch w={14} frame /></IconSlot>
          <LinkLabel>{"Stroke "}</LinkLabel>
          <Combo w={57} arrow="down" value="0 pt" />
          <Preview><Svg $w={24} $h={7} viewBox="0 0 24 7"><rect width="24" height="7" fill="#000" stroke="none" /></Svg></Preview>
          <Box $w={15}><Arrow><Chevron /></Arrow></Box>
        </Row>
        <Row $h={21.5}>
          <IconSlot $w={22}>
            <Svg $w={14} viewBox="0 0 14 14" $color="#3b82d0"><path d="M3 3h8v8H3z" /><path fill="#3b82d0" stroke="none" d="M1 1h4v4H1zM9 1h4v4H9zM1 9h4v4H1zM9 9h4v4H9z" /></Svg>
          </IconSlot>
          <LinkLabel>{"Corner "}</LinkLabel>
          <Combo w={57} value="1p0" />
          <Preview><Svg $w={28} $h={15} viewBox="0 0 28 15" $color="#333"><path d="M1 2.500h25V14" /></Svg></Preview>
          <Box $w={15}><Arrow><Chevron /></Arrow></Box>
        </Row>
        <Row $h={21.5}>
          <IconSlot $w={22}>
            <Svg $w={14} viewBox="0 0 14 14" $line={1}>
              <path d="M1 1h12v12H1z" />
              <path fill="#9a9a9a" stroke="none" d="M2 2h2.500v2.500H2zM7 2h2.500v2.500H7zM4.500 4.500H7V7H4.500zM9.500 4.500H12V7H9.500zM2 7h2.500v2.500H2zM7 7h2.500v2.500H7zM4.500 9.500H7V12H4.500zM9.500 9.500H12V12H9.500z" />
            </Svg>
          </IconSlot>
          <LinkLabel>{"Opacity "}</LinkLabel>
          <Box $w={57}><Value $pad={2}>100%</Value><Arrow $plain><Chevron dir="right" /></Arrow></Box>
        </Row>
        <Row $h={24}>
          <IconSlot $w={22} $pad={1}>
            <Svg $w={15} viewBox="0 0 15 15" $line={1.3}><path d="M2 2h10v10H2z" strokeDasharray="3.500 1.500" /><path d="M13.500 13h1.500" /></Svg>
          </IconSlot>
          <Glyph $w={14} $italic $light $size={14}>fx.</Glyph>
        </Row>
        <Row $h={31} $top={7}>Character</Row>
        <Select w={182} pad={1}><SearchIcon />Minion Pro</Select>
        <Row $h={17} $gap={5}><Select w={182} pad={1}>Regular</Select></Row>
        <CharGrid>
          <SizeIcon />
          <Combo w={66} off arrow="down" />
          <LeadingIcon />
          <Combo w={65} off arrow="down" value="Auto" pad={1} />
          <KerningIcon />
          <Combo w={66} off arrow="down" value="Optical" />
          <TrackingIcon />
          <Combo w={65} arrow="down" value="0" />
          <VScaleIcon />
          <Combo w={66} arrow="down" value="100%" />
          <HScaleIcon />
          <Combo w={65} arrow="down" value="100%" />
          <BaselineIcon />
          <Combo w={66} value="0 pt" />
          <Glyph $size={15} $italic>T</Glyph>
          <Combo w={65} value="0º" />
        </CharGrid>
        <Row $h={17} $gap={7}>
          <Select w={86} plain pad={1}>English: USA</Select>
          <OpenType>OpenType</OpenType>
        </Row>
        <Row $h={34} $top={20}>
          <IconSlot $w={28}><Glyph>TT</Glyph></IconSlot>
          <IconSlot $w={41}><Glyph>T<small>T</small></Glyph></IconSlot>
          <IconSlot $w={28}><Glyph $w={14}>T<sup>1</sup></Glyph></IconSlot>
          <IconSlot $w={42}><Glyph $w={14}>T<sub>1</sub></Glyph></IconSlot>
          <IconSlot $w={28}><Glyph $w={10} $deco="underline">T</Glyph></IconSlot>
          <IconSlot $w={14}><Glyph $w={10} $deco="line-through">T</Glyph></IconSlot>
        </Row>
      </PropsContent>
      <PropsScroll>
        <Chevron dir="up" color="#777" />
        <PropsThumb />
      </PropsScroll>
    </PropsBody>
  </PropsColumn>
);

/* ---------- taskbar ---------- */

const Taskbar = styled.footer`
  display: flex;
  flex: none;
  height: 27px;
  background: linear-gradient(90deg, #1f3a40 0, #20363d 50%, #1c3045 85%, #1b2b47 100%);
`;

const Start = styled.div`
  display: flex;
  align-items: center;
  justify-content: center;
  width: 32px;
`;

const SearchBox = styled.div`
  display: flex;
  align-items: center;
  gap: 7px;
  width: 229px;
  padding-left: 7px;
  background: #f2f2f2;
  color: #4a4a4a;
  font-size: 10px;
  letter-spacing: -0.3px;
`;

const Task = styled.div`
  display: flex;
  align-items: center;
  justify-content: center;
  width: ${(p) => p.$w || 33}px;
  border-bottom: 2px solid ${(p) => (p.$open ? "#76b9ed" : "transparent")};
  background: ${(p) => (p.$on ? "#4f676e" : "transparent")};
`;

const Tray = styled.div`
  display: flex;
  align-items: center;
  margin-left: auto;
`;

const TrayIcon = styled.span`
  display: flex;
  justify-content: center;
  width: ${(p) => p.$w || 16}px;
`;

const Clock = styled.div`
  width: 42px;
  color: #fff;
  font-size: 8.500px;
  line-height: 12px;
  text-align: center;
`;

const Bell = styled.div`
  display: flex;
  justify-content: center;
  width: 36px;
`;

const Tasks = () => (
  <Taskbar>
    <Start>
      <Svg $w={12} viewBox="0 0 12 12"><path fill="#fff" stroke="none" d="M0 1.700 5 1v4.600H0zM5.600.9 12 0v5.600H5.600zM0 6.300h5V11l-5-.7zM5.600 6.300H12V12l-6.400-.9z" /></Svg>
    </Start>
    <SearchBox>
      <Svg $w={12} viewBox="0 0 12 12" $color="#333" $line={1.1}><circle cx="7.500" cy="4.500" r="3.500" /><path d="M5 7 .8 11.300" /></Svg>
      Type here to search
    </SearchBox>
    <Task>
      <Svg $w={12} viewBox="0 0 12 12" $line={1} $color="#ddd"><path d="M1 1v1.500h6V1M1 4.500h6v4H1zM1 12v-1.500h6V12M10 1v2M10 6v6M9 4.500h2" /></Svg>
    </Task>
    <Task $w={34}>
      <Svg $w={17} viewBox="0 0 17 17">
        <circle cx="8.500" cy="8.500" r="8" fill="#1479ce" stroke="none" />
        <path fill="#38c4a4" stroke="none" d="M1 6Q4 .3 9 .5q6 .5 7.500 6.500 0 4-4 4-2.500 0-2-2 1.500-2-1.500-3Q5 5 1 9z" />
        <path fill="#0c4fa0" stroke="none" d="M6 7q-3 6 3 9.200 4-.2 6-3Q9 15 8 9z" />
      </Svg>
    </Task>
    <Task $w={32} $open>
      <Svg $w={16} $h={13} viewBox="0 0 16 13"><path fill="#e8b63a" stroke="none" d="M1 1h5l1.500 1.500H15V12H1z" /><path fill="#fbdc78" stroke="none" d="M1 4h14v8H1z" /><path d="M4.500 12V7.500h7V12" stroke="#4a94c8" strokeWidth="2" /></Svg>
    </Task>
    <Task $w={33}>
      <Svg $w={16} viewBox="0 0 16 16">
        <path d="M5 5V1.500h6V5" />
        <path fill="#f5f5f5" stroke="none" d="M1 4h14v10.500q0 1-1 1H2q-1 0-1-1z" />
        <path fill="#e0452b" stroke="none" d="M4.500 6H7.500v3h-3z" /><path fill="#67a829" stroke="none" d="M8.500 6h3v3h-3z" /><path fill="#2196d8" stroke="none" d="M4.500 10h3v3h-3z" /><path fill="#f2b51c" stroke="none" d="M8.500 10h3v3h-3z" />
      </Svg>
    </Task>
    <Task $w={33} $open>
      <Svg $w={17} viewBox="0 0 17 17">
        <circle cx="8.500" cy="8.500" r="8" fill="#f8c624" stroke="none" />
        <path fill="#dc4a3b" stroke="none" d="M8.500 8.500 1.600 4.500A8 8 0 0 1 15.400 4.500z" />
        <path fill="#2f9e51" stroke="none" d="M8.500 8.500 1.600 4.500A8 8 0 0 0 8.200 16.500l3.500-6z" />
        <circle cx="8.500" cy="8.500" r="3.500" fill="#3b79e0" stroke="#fff" strokeWidth="1" />
      </Svg>
    </Task>
    <Task $w={32} $open $on><Logo $size={14}>Id</Logo></Task>
    <Tray>
      <TrayIcon><Chevron dir="up" w={9} color="#fff" /></TrayIcon>
      <TrayIcon $w={15}><Svg $w={8} $h={12} viewBox="0 0 8 12" $color="#eee"><rect x="2" y="1" width="4" height="6.500" rx="2" fill="#eee" /><path d="M.8 5.500V8h6.400V5.500M4 8v3.500M2 11.300h4" /></Svg></TrayIcon>
      <TrayIcon><Svg $w={12} viewBox="0 0 12 12" $color="#eee" $line={1}><path d="M4 2.500h7.500v6H4.500M6 11h4M1 1.500h3v3H1zM2.500 5v6" /></Svg></TrayIcon>
      <TrayIcon $w={18}><Svg $w={12} viewBox="0 0 12 12" $color="#eee" $line={1}><path d="M1 4.500h2L5.500 2v8L3 7.500H1zM7 4q1.500 2 0 4M8.500 3q2 3 0 6M10 2q3 4 0 8" /></Svg></TrayIcon>
      <Clock>1:03 PM<br />6/12/2024</Clock>
      <Bell>
        <Svg $w={18} viewBox="0 0 18 18">
          <path fill="#f5f5f5" stroke="none" d="M1 2h12v9H7l-3 3v-3H1z" />
          <path stroke="#223" strokeWidth=".9" d="M3 4.500h8M3 6.500h8M3 8.500h5" />
          <circle cx="12" cy="12" r="4.500" fill="#33424c" stroke="#8a959c" strokeWidth=".9" />
          <text x="10.200" y="14.700" fontSize="8" fontWeight="bold" fill="#fff" stroke="none">3</text>
        </Svg>
      </Bell>
    </Tray>
  </Taskbar>
);

const App = () => (
  <>
    <GlobalStyle />
    <Shell>
      <Menu />
      <Controls />
      <Main>
        <Toolbox />
        <Document />
        <Dock />
        <Properties />
      </Main>
      <Tasks />
    </Shell>
  </>
);

export default App;
